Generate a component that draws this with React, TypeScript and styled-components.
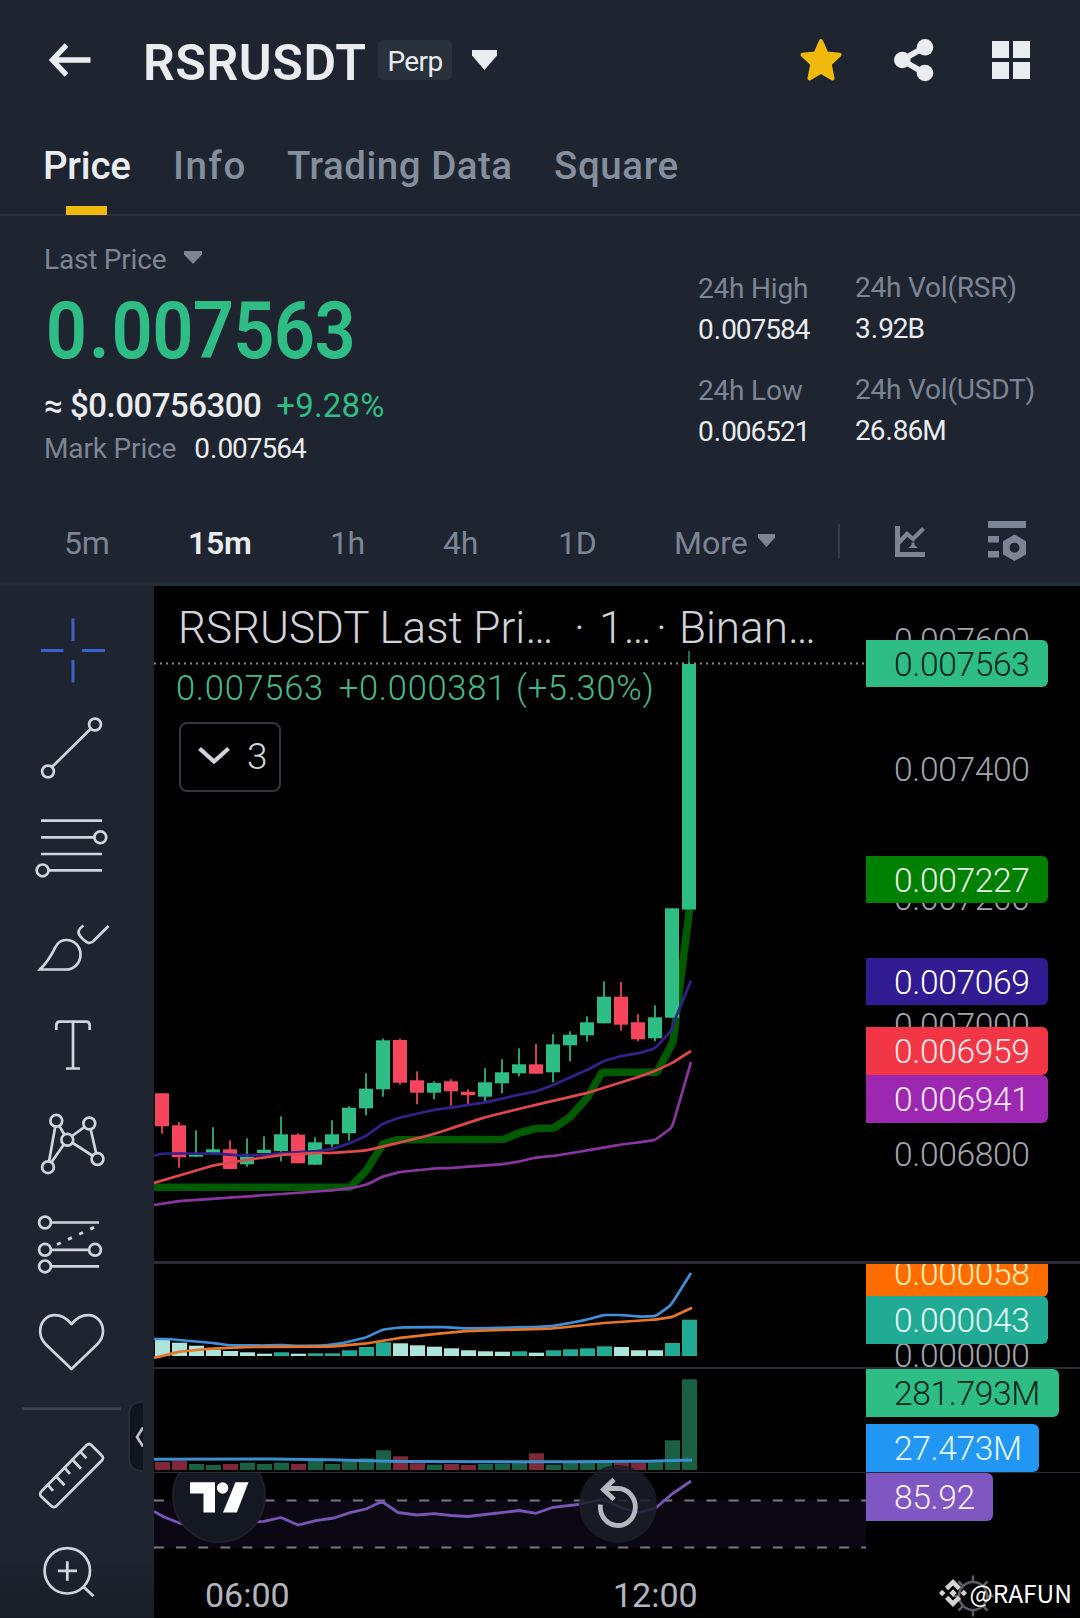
import React from 'react';
import styled, { createGlobalStyle } from 'styled-components';

const C = {
  bg: '#1e2530',
  white: '#eaecef',
  grey: '#7d8594',
  green: '#2ebd85',
  red: '#f6465d',
  yellow: '#f0b90b',
  rule: '#2a3039',
  icon: '#d1d4dc',
  axis: '#a3a5ac',
};

const Global = createGlobalStyle`
  * { box-sizing: border-box; }
  body { margin: 0; background: ${C.bg}; }
`;

const Page = styled.div`
  width: 1080px;
  height: 1618px;
  overflow: hidden;
  display: flex;
  flex-direction: column;
  background: ${C.bg};
  color: ${C.white};
  font-family: Roboto, 'Noto Sans', 'Liberation Sans', sans-serif;
`;

const Text = styled.span<{ $size: number; $weight?: number; $color?: string; $ls?: number }>`
  font-size: ${p => p.$size}px;
  font-weight: ${p => p.$weight ?? 400};
  color: ${p => p.$color ?? C.white};
  letter-spacing: ${p => p.$ls ?? 0}px;
  line-height: 1;
  white-space: pre;
`;

/* ---------- header ---------- */

const Header = styled.header`
  height: 120px;
  display: flex;
  align-items: center;
  padding: 0 50px 0 49px;
`;
const Title = styled.h1`
  margin: 0 12px 0 52px;
  padding-top: 5px;
  width: 223px;
  font-size: 50px;
  font-weight: 600;
  line-height: 1;
  letter-spacing: 0.6px;
`;
const Badge = styled.span`
  width: 74px;
  height: 40px;
  margin-right: 20px;
  padding-top: 2px;
  border-radius: 5px;
  background: #29313d;
  display: flex;
  align-items: center;
  justify-content: center;
  font-size: 28px;
  letter-spacing: -0.6px;
`;
const HeaderActions = styled.div`
  margin-left: auto;
  display: flex;
  align-items: center;
`;
const ActionGap = styled.span<{ $w: number }>`
  width: ${p => p.$w}px;
`;

const Caret = ({ w, h, color }: { w: number; h: number; color: string }) => (
  <svg width={w} height={h} viewBox="0 0 25 20" preserveAspectRatio="none">
    <path d="M0 0H25V5.5L12.5 20L0 5.5Z" fill={color} />
  </svg>
);
const CaretSlot = styled.span`
  display: flex;
  padding-bottom: 6px;
`;

/* ---------- tabs ---------- */

const Tabs = styled.nav`
  height: 96px;
  display: grid;
  grid-template-columns: 130px 114px 267px 1fr;
  padding-left: 43px;
  border-bottom: 2px solid ${C.rule};
`;
const Tab = styled.div<{ $active?: boolean; $ls: number }>`
  position: relative;
  height: 95px;
  padding-top: 24px;
  font-size: 38.5px;
  font-weight: 500;
  line-height: 44px;
  letter-spacing: ${p => p.$ls}px;
  white-space: nowrap;
  color: ${p => (p.$active ? C.white : '#848e9c')};
`;
const TabMark = styled.span`
  position: absolute;
  left: 23px;
  bottom: 0;
  width: 41px;
  height: 9px;
  background: ${C.yellow};
`;

/* ---------- price summary ---------- */

const Summary = styled.section`
  height: 288px;
  display: flex;
  justify-content: space-between;
  padding: 24px 25px 0 44px;
`;
const PriceColumn = styled.div`
  display: flex;
  flex-direction: column;
`;
const Row = styled.div<{ $h: number; $gap?: number; $pt?: number }>`
  height: ${p => p.$h}px;
  padding-top: ${p => p.$pt ?? 0}px;
  display: flex;
  align-items: center;
  gap: ${p => p.$gap ?? 0}px;
`;
const NumText = styled(Text)`
  letter-spacing: -0.037em;
`;
const BigPrice = styled(Text)`
  display: inline-block;
  padding-left: 2px;
  letter-spacing: -0.01em;
  transform: scaleX(0.915);
  transform-origin: left center;
`;
const Dot = styled.span`
  margin: 0 0.037em;
`;
const Num = ({ value, size }: { value: string; size: number }) => {
  const [a, b] = value.split('.');
  return (
    <NumText $size={size}>
      {a}
      <Dot>.</Dot>
      {b}
    </NumText>
  );
};
const Stats = styled.div`
  display: grid;
  grid-template-columns: 157px 200px;
  padding-top: 28px;
`;
const StatColumn = styled.div<{ $lift?: number }>`
  display: flex;
  flex-direction: column;
  gap: 20px;
  margin-top: -${p => p.$lift ?? 0}px;
`;
const Stat = ({ label, value }: { label: string; value: string }) => (
  <div>
    <Row $h={41}>
      <Text $size={28} $color={C.grey} $ls={-0.2}>{label}</Text>
    </Row>
    <Row $h={41}>
      <Num value={value} size={28} />
    </Row>
  </div>
);

/* ---------- intervals ---------- */

const Intervals = styled.div`
  height: 82px;
  display: grid;
  grid-template-columns: 124px 142px 113px 115px 116px 164px 57px 93px auto;
  align-items: center;
  padding: 0 0 0 64px;
  border-bottom: 4px solid #252d37;
`;
const MoreItem = styled.div`
  display: flex;
  align-items: center;
  gap: 10px;
`;
const VRule = styled.span`
  width: 2px;
  height: 34px;
  margin-bottom: 4px;
  background: #333b47;
`;
const IconSlot = styled.span`
  display: flex;
  padding-bottom: 4px;
`;

/* ---------- workspace ---------- */

const Workspace = styled.main`
  flex: 1;
  display: flex;
  min-height: 0;
`;
const Sidebar = styled.aside`
  position: relative;
  width: 154px;
  flex: none;
  background: linear-gradient(${C.bg} 94%, #181d27);
`;
const CollapseTab = styled.div`
  position: absolute;
  left: 128px;
  top: 815px;
  width: 15px;
  height: 71px;
  border-radius: 12px 0 0 12px;
  border: 2px solid #262b37;
  border-right: 0;
  background: #10141f;
  overflow: hidden;
  display: flex;
  align-items: center;
  justify-content: flex-end;
`;
const Chart = styled.div`
  position: relative;
  width: 926px;
  display: flex;
  flex-direction: column;
  background: #000;
`;
const Pane = styled.div<{ $h: number; $line?: number }>`
  position: relative;
  height: ${p => p.$h}px;
  flex: none;
  overflow: hidden;
  display: flex;
  border-bottom: ${p => p.$line ?? 0}px solid #2a2d36;
`;
const Plot = styled.svg`
  display: block;
  width: 712px;
  height: 100%;
  flex: none;
`;
const Axis = styled.div`
  position: relative;
  flex: 1;
`;
const AxisTag = styled.div<{ $y: number; $bg?: string; $color?: string; $w?: number }>`
  position: absolute;
  left: 0;
  top: ${p => p.$y - 24}px;
  width: ${p => p.$w ?? 182}px;
  height: 47.6px;
  padding-left: 28px;
  border-radius: 0 6px 6px 0;
  background: ${p => p.$bg ?? 'transparent'};
  color: ${p => p.$color ?? C.axis};
  font-size: 33.6px;
  font-weight: 340;
  line-height: 49.5px;
  letter-spacing: -0.35px;
  white-space: nowrap;
`;
const Legend = styled.div`
  position: absolute;
  left: 25px;
  top: 14px;
  display: flex;
  flex-direction: column;
`;
const LegendTitle = styled.div`
  height: 56px;
  display: grid;
  grid-template-columns: 396px 25px 57px 23px auto;
  align-items: center;
  margin-left: -1px;
`;
const LegendText = styled(Text)`
  font-weight: 330;
  color: #d2d4db;
`;
const LegendValues = styled.div`
  height: 64px;
  display: flex;
  align-items: center;
  gap: 15px;
  margin-left: -3px;
`;
const Collapse = styled.div`
  width: 102px;
  height: 70px;
  margin-top: 2px;
  border: 2px solid #35373e;
  border-radius: 8px;
  display: flex;
  align-items: center;
  gap: 17px;
  padding: 0 0 2px 17px;
`;
const TVBadge = styled.div`
  position: absolute;
  left: 18px;
  top: -24px;
  width: 94px;
  height: 94px;
  border-radius: 50%;
  background: #131822;
  border: 2px solid #221e27;
`;
const Reload = styled.div`
  position: absolute;
  left: 425px;
  top: 879px;
  width: 78px;
  height: 78px;
  border-radius: 50%;
  background: rgba(27, 29, 40, 0.86);
`;
const TimeAxis = styled.div`
  flex: 1;
  display: grid;
  grid-template-columns: 408px auto;
  padding: 4px 0 0 51px;
  align-items: center;
`;
const Watermark = styled.div`
  position: absolute;
  right: 8px;
  bottom: 9px;
  height: 32px;
  display: flex;
  align-items: center;
  gap: 3px;
  font-family: 'Noto Sans CJK SC', 'Noto Sans', sans-serif;
  font-size: 24.5px;
  line-height: 32px;
  color: #fff;
`;
const Gear = styled.svg`
  position: absolute;
  right: 85px;
  bottom: 0;
`;

/* ---------- data ---------- */

const TOP = 586;
const cx = (i: number) => 162 + i * 17;

// direction, high, body top, body bottom, low
const candles: [string, number, number, number, number][] = [
  ['r', 1093.3, 1093.3, 1126.3, 1133.7],
  ['r', 1122, 1125.3, 1157.3, 1167.7],
  ['g', 1130.3, 1154.7, 1156.7, 1156.7],
  ['g', 1127.3, 1149.3, 1152.7, 1152.7],
  ['r', 1140.3, 1149.3, 1169, 1169],
  ['g', 1138.3, 1156.7, 1164.3, 1166.7],
  ['g', 1136.3, 1149.7, 1153, 1153],
  ['g', 1116.3, 1134.3, 1151, 1161.3],
  ['r', 1133.3, 1134.7, 1163.3, 1163.3],
  ['g', 1137.3, 1142.3, 1164.7, 1164.7],
  ['g', 1120.3, 1134.3, 1144.3, 1147.3],
  ['g', 1106.3, 1107.7, 1133.3, 1140.7],
  ['g', 1073.3, 1088.7, 1108.3, 1115.3],
  ['g', 1038.7, 1040.3, 1089.3, 1096.7],
  ['r', 1038.7, 1040, 1082.7, 1084.7],
  ['r', 1071.3, 1080.3, 1092.7, 1104.3],
  ['g', 1081.3, 1083, 1092.7, 1099.3],
  ['r', 1079.3, 1081.3, 1091.3, 1105.7],
  ['r', 1089.3, 1091.7, 1095.2, 1104],
  ['g', 1068.3, 1082.3, 1096.7, 1103.3],
  ['g', 1059.3, 1072.3, 1083.3, 1093.3],
  ['g', 1048.3, 1064.3, 1073.3, 1076.3],
  ['r', 1044, 1064.3, 1073.7, 1073.7],
  ['g', 1034.3, 1044.3, 1072.3, 1082.3],
  ['g', 1031.3, 1034.7, 1045.3, 1061.3],
  ['g', 1016.3, 1022.3, 1035.3, 1041.3],
  ['g', 981.3, 996.7, 1023.3, 1023.3],
  ['r', 982, 996.7, 1024.7, 1030.7],
  ['r', 1014.3, 1022.3, 1039.3, 1041.3],
  ['g', 1005.3, 1017.3, 1038.3, 1041.3],
  ['g', 908.3, 908.3, 1017.7, 1017.7],
  ['g', 651, 664, 909.5, 909.5],
];

const macd: [number, number][] = [
  [1339.3, 0], [1342.7, 0], [1345.7, 0], [1349.7, 0], [1351, 0], [1352.3, 0], [1353.7, 0], [1352.3, 1],
  [1353.7, 0], [1353.3, 1], [1353.3, 1], [1350.3, 1], [1347, 1], [1342.3, 1], [1343.3, 0], [1345.3, 0],
  [1346.7, 0], [1348.3, 0], [1350.3, 0], [1351.3, 0], [1351.7, 0], [1351.3, 1], [1352.7, 0], [1350.3, 1],
  [1349.3, 1], [1348.3, 1], [1346.3, 1], [1347, 0], [1350.3, 0], [1350.3, 0], [1343, 1], [1319.7, 1],
];

const volume: number[] = [
  1462, 1460.7, 1464, 1465, 1464, 1462.7, 1464, 1462.7, 1464, 1460.3, 1464, 1461.3, 1458.3, 1450.3, 1456.3, 1463.3,
  1464.7, 1464, 1465, 1464, 1463.7, 1460.7, 1453.3, 1464.7, 1462.3, 1462.3, 1462.3, 1462.7, 1462.7, 1462.3, 1440.3,
  1379.3,
];

const smooth = (pts: number[][]) => {
  const k = 0.86;
  let d = `M${pts[0][0]} ${pts[0][1]}`;
  for (let i = 1; i < pts.length - 1; i++) {
    const [px, py] = pts[i - 1];
    const [x, y] = pts[i];
    const [nx, ny] = pts[i + 1];
    d += `L${x * k + px * (1 - k)} ${y * k + py * (1 - k)}Q${x} ${y} ${x * k + nx * (1 - k)} ${y * k + ny * (1 - k)}`;
  }
  const e = pts[pts.length - 1];
  return d + `L${e[0]} ${e[1]}`;
};

const blueLine = [[154, 1155.7], [162, 1153.5], [215, 1153.5], [240, 1155.5], [262, 1155], [281, 1153], [315, 1151.5], [332, 1149], [349, 1143.5], [366, 1136], [383, 1123.5], [400, 1117.5], [434, 1110], [451, 1107.5], [485, 1102.5], [519, 1094.7], [536, 1091.5], [553, 1085], [587, 1070], [604, 1061], [621, 1056], [640, 1053], [655, 1048.3], [671, 1031], [676, 1017], [691, 980.5]];
const redLine = [[154, 1183], [213, 1165.5], [240, 1161], [264, 1157.5], [281, 1155], [315, 1153], [332, 1153], [366, 1150.5], [400, 1142.5], [434, 1134], [450, 1128.7], [485, 1117.3], [536, 1104.7], [587, 1093], [604, 1087.7], [638, 1077], [655, 1071], [672, 1063], [691, 1051]];
const greenLine = [[154, 1187.3], [350, 1187.3], [366, 1171], [383, 1144], [398, 1139.7], [504, 1139.3], [519, 1133], [536, 1128.5], [554, 1128], [570, 1117], [587, 1098], [602, 1072.3], [657, 1072.3], [673, 1042], [690, 905]];
const purpleLine = [[154, 1205], [179, 1201], [230, 1197.7], [281, 1194], [330, 1190.5], [355, 1187.5], [368, 1184], [383, 1176.5], [400, 1172], [434, 1168.5], [451, 1168], [504, 1164], [519, 1161.5], [536, 1157.5], [553, 1156], [587, 1150.5], [621, 1144.5], [638, 1142.5], [655, 1140], [672, 1127.5], [691, 1062]];
const macdLine = [[154, 1339], [168, 1339], [190, 1341], [213, 1343], [230, 1345.3], [264, 1345.5], [281, 1345], [298, 1346], [325, 1345.5], [343, 1343], [366, 1337.5], [383, 1329.5], [400, 1327.5], [440, 1327], [468, 1328.5], [536, 1327], [553, 1326], [570, 1323], [587, 1319.7], [604, 1315], [621, 1315], [640, 1316.7], [656, 1316], [671, 1305], [691, 1273]];
const signalLine = [[154, 1358], [179, 1351.7], [213, 1348.5], [250, 1347], [332, 1346.5], [366, 1343.5], [400, 1338], [434, 1334], [468, 1331], [553, 1328.5], [604, 1323], [656, 1319.5], [672, 1317], [692, 1307.7]];
const volLine = [[154, 1459.3], [280, 1459], [340, 1460], [400, 1461.5], [560, 1461.7], [650, 1461.3], [692, 1460]];
const rsiLine = [[154, 1511.5], [164, 1517], [180, 1523.3], [213, 1527], [247, 1522.5], [264, 1521.3], [281, 1517.5], [298, 1525], [317, 1520.3], [334, 1518], [350, 1512.7], [366, 1509], [382, 1501.5], [398, 1512.5], [417, 1515], [434, 1513.7], [451, 1515.5], [468, 1516.5], [485, 1514.5], [519, 1510.5], [536, 1513.3], [553, 1507.3], [578, 1504.5], [603, 1499], [622, 1508], [638, 1513], [656, 1507.7], [672, 1494], [691, 1481]];

const Line = ({ pts, color, w = 2.7 }: { pts: number[][]; color: string; w?: number }) => (
  <path d={smooth(pts)} fill="none" stroke={color} strokeWidth={w} strokeLinejoin="round" />
);

const MainPlot = () => (
  <Plot viewBox={`154 ${TOP} 712 675`}>
    <line x1="154" x2="866" y1="663.5" y2="663.5" stroke="#7d8f86" strokeWidth="2" strokeDasharray="2 4" />
    <path d={'M' + greenLine.map(p => p.join(' ')).join('L')} fill="none" stroke="#005a00" strokeWidth="7.6" strokeLinejoin="bevel" />
    {candles.map(([dir, h, t, b, l], i) => {
      const fill = dir === 'g' ? C.green : C.red;
      return (
        <g key={i} fill={fill}>
          <rect x={cx(i) - 1} y={h} width="2" height={l - h} opacity={i === 31 ? 0.6 : 0.85} />
          <rect x={cx(i) - 7} y={t} width="14" height={b - t} />
        </g>
      );
    })}
    <Line pts={purpleLine} color="#8a35a0" />
    <Line pts={blueLine} color="#33228c" />
    <Line pts={redLine} color="#e0484c" />
  </Plot>
);

const MacdPlot = () => (
  <Plot viewBox="154 1264 712 103">
    {macd.map(([y, up], i) => (
      <rect key={i} x={cx(i) - 7} y={y} width="15" height={1356 - y} fill={up ? '#22ab94' : '#ace5dc'} />
    ))}
    <Line pts={macdLine} color="#3f90da" />
    <Line pts={signalLine} color="#e8762a" />
  </Plot>
);

const VolumePlot = () => (
  <Plot viewBox="154 1369 712 103">
    {volume.map((y, i) => (
      <rect key={i} x={cx(i) - 7} y={y} width="15" height={1470 - y} fill={candles[i][0] === 'g' ? '#1a6045' : '#802839'} />
    ))}
    <Line pts={volLine} color="#3a8fce" w={3} />
  </Plot>
);

const RsiPlot = () => (
  <Plot viewBox="154 1473 712 95">
    <rect x="154" y="1500.5" width="712" height="47" fill="#0b0713" />
    <line x1="154" x2="866" y1="1500.5" y2="1500.5" stroke="#777881" strokeWidth="2" strokeDasharray="10 12.1" />
    <line x1="154" x2="866" y1="1547.5" y2="1547.5" stroke="#777881" strokeWidth="2" strokeDasharray="10 12.1" />
    <path d={'M' + rsiLine.map(p => p.join(' ')).join('L')} fill="none" stroke="#7955b8" strokeWidth="2.8" strokeLinejoin="round" />
  </Plot>
);

const ring = (x: number, y: number) => <circle key={`${x}-${y}`} cx={x} cy={y} r="5.9" fill={C.bg} />;

const DrawingTools = () => (
  <svg width="154" height="1032" viewBox="0 586 154 1032" fill="none" stroke={C.icon} strokeWidth="2.7">
    <path d="M73 618.5V641M73 660V682.5M41 650.5H63.500M82 650.5H105" stroke="#3b62cc" strokeWidth="3" />
    <path d="M52 767L91 728.500" />
    {ring(95, 724.5)}
    {ring(48, 771.5)}
    <path d="M41 820.7H102M41 837.3H96M41 854H102M46 870.3H102" />
    {ring(100.3, 837.3)}
    {ring(42.6, 870.4)}
    <path d="M40 969.5C51 958 53 951 55.500 947C58 942 62 940 66 940C74 940 80.500 946 80.500 954.500C80.500 963 74 969.500 66 969.500Z" />
    <path d="M83.500 925.500C79 928.500 76.500 932 80.500 936.500C85 942 90 945.500 94 940.500L108.500 926" />
    <path d="M56.300 1030V1025.500Q56.300 1021.700 60 1021.700H86Q89.700 1021.700 89.700 1025.500V1030M73 1021.700V1068.500M66 1068.500H80" />
    <g transform="translate(0 0.5)">
      <path d="M56.300 1120.300L48 1166.700L67.300 1139ZM67.300 1139L89.300 1123L97.500 1158.500Z" />
      {ring(56.3, 1120.3)}
      {ring(89.3, 1123)}
      {ring(67.3, 1139.3)}
      {ring(97.5, 1158.5)}
      {ring(48, 1166.7)}
    </g>
    <g transform="translate(0 1.5)">
      <path d="M45 1221H99M45 1248.300H95M45 1264.900H99" />
      <path d="M57 1243L97 1224.500" strokeDasharray="4.200 8" strokeWidth="3" />
      {ring(45, 1221)}
      {ring(45, 1248.3)}
      {ring(95, 1248.3)}
      {ring(45, 1264.9)}
    </g>
    <path transform="translate(0 2.5)" d="M71.500 1321.500C65 1314 59 1312.700 55 1312.700C46 1312.700 40.200 1320 40.200 1329C40.200 1335 42 1338 46 1342L71.500 1366.500L97 1342C101 1338 103 1335 103 1329C103 1320 97 1312.700 88 1312.700C84 1312.700 78 1314 71.500 1321.500Z" strokeLinejoin="round" />
    <path d="M22 1408.700H121" stroke="#3d424c" strokeWidth="3" />
    <g transform="translate(0 3.8)">
      <path d="M42 1487L86.500 1441.500Q89 1439 91.500 1441.500L101.500 1451.500Q104.500 1454 101.500 1457L57 1501.500Q54 1505 51 1502L41.500 1493Q38.500 1490 42 1487Z" />
      <path d="M48 1481L53 1487M56.500 1473L64.500 1481.500M65 1464.500L70 1470M73 1456.500L81 1465M81 1448.500L86.500 1454.500" />
    </g>
    <g transform="translate(0 4.8)">
      <circle cx="67.300" cy="1566" r="22.700" />
      <path d="M58 1566H77M67.300 1556.500V1576M83 1581.500L93.500 1591.500" strokeWidth="2.800" />
    </g>
  </svg>
);

const BackIcon = () => (
  <svg width="42" height="34" viewBox="0 0 42 34" fill="none" stroke={C.white} strokeWidth="5.400">
    <path d="M4 17H41.500M17.500 2L3.500 17L17.500 32" />
  </svg>
);
const StarIcon = () => (
  <svg width="42" height="44" viewBox="0 0 42 44">
    <path
      d="M21 3L26.500 15.500L39.500 16.800L29.700 26L32.500 40.500L21 33.700L9.500 40.500L12.300 26L2.500 16.800L15.500 15.500Z"
      fill={C.yellow} stroke={C.yellow} strokeWidth="4" strokeLinejoin="round"
    />
  </svg>
);
const ShareIcon = () => (
  <svg width="40" height="44" viewBox="0 0 40 44" fill={C.white}>
    <path d="M8 22L31 9M8 22L31 35.500" stroke={C.white} strokeWidth="6" />
    <circle cx="8.300" cy="22" r="8.300" />
    <circle cx="31" cy="9.300" r="8.300" />
    <circle cx="31" cy="35" r="8.300" />
  </svg>
);
const GridIcon = () => (
  <svg width="38" height="38" viewBox="0 0 38 38" fill={C.white}>
    <path d="M0 0H17V17H0ZM21 0H38V17H21ZM0 21H17V38H0ZM21 21H38V38H21Z" />
  </svg>
);
const IndicatorIcon = () => (
  <svg width="30" height="31" viewBox="0 0 30 31" fill="none" stroke={C.grey}>
    <path d="M2.500 0V28.500H30" strokeWidth="5" />
    <path d="M3.500 17L12 8L18 13L28.500 2.500" strokeWidth="4.200" />
    <path d="M13.500 22L16.500 19V16.500H19.500V19L23 22Z" fill={C.grey} stroke="none" />
  </svg>
);
const SettingsIcon = () => (
  <svg width="38" height="41" viewBox="0 0 38 41" fill={C.grey}>
    <path d="M0 0H38V7H0ZM0 15H11V21.500H0ZM0 30H11V36.500H0Z" />
    <path fillRule="evenodd" d="M26.500 13.500L38 20.200V33.400L26.500 40L15 33.400V20.200ZM26.500 21.800A5 5 0 1 0 26.500 31.800A5 5 0 1 0 26.500 21.800Z" />
  </svg>
);

const intervals = [
  { label: '5m', ls: -0.3 },
  { label: '15m', ls: -0.3, active: true },
  { label: '1h', ls: -0.6 },
  { label: '4h', ls: -0.3 },
  { label: '1D', ls: -0.3 },
];

export default function App() {
  return (
    <Page>
      <Global />
      <Header>
        <BackIcon />
        <Title>RSRUSDT</Title>
        <Badge>Perp</Badge>
        <Caret w={25} h={20} color={C.white} />
        <HeaderActions>
          <StarIcon />
          <ActionGap $w={52} />
          <ShareIcon />
          <ActionGap $w={58} />
          <GridIcon />
        </HeaderActions>
      </Header>

      <Tabs>
        <Tab $active $ls={-0.2}>Price<TabMark /></Tab>
        <Tab $ls={1.5}>Info</Tab>
        <Tab $ls={0.5}>Trading Data</Tab>
        <Tab $ls={0.6}>Square</Tab>
      </Tabs>

      <Summary>
        <PriceColumn>
          <Row $h={40} $gap={18}>
            <Text $size={28} $color={C.grey} $ls={-0.2}>Last Price</Text>
            <CaretSlot><Caret w={18} h={13} color={C.grey} /></CaretSlot>
          </Row>
          <Row $h={99} $pt={3}>
            <BigPrice $size={79} $weight={600} $color={C.green}>
              0<Dot>.</Dot>007563
            </BigPrice>
          </Row>
          <Row $h={52} $gap={15}>
            <Text $size={33} $weight={500} $ls={-0.5}>≈ $0.00756300</Text>
            <Text $size={33} $weight={450} $ls={0.2} $color={C.green}>+9.28%</Text>
          </Row>
          <Row $h={36} $gap={18}>
            <Text $size={28} $color={C.grey} $ls={-0.15}>Mark Price</Text>
            <Num value="0.007564" size={28} />
          </Row>
        </PriceColumn>
        <Stats>
          <StatColumn>
            <Stat label="24h High" value="0.007584" />
            <Stat label="24h Low" value="0.006521" />
          </StatColumn>
          <StatColumn $lift={1}>
            <Stat label="24h Vol(RSR)" value="3.92B" />
            <Stat label="24h Vol(USDT)" value="26.86M" />
          </StatColumn>
        </Stats>
      </Summary>

      <Intervals>
        {intervals.map(i => (
          <Text key={i.label} $size={32} $ls={i.ls} $weight={i.active ? 600 : 400} $color={i.active ? C.white : C.grey}>
            {i.label}
          </Text>
        ))}
        <MoreItem>
          <Text $size={32} $color={C.grey}>More</Text>
          <CaretSlot><Caret w={17} h={13} color={C.grey} /></CaretSlot>
        </MoreItem>
        <VRule />
        <IconSlot><IndicatorIcon /></IconSlot>
        <IconSlot><SettingsIcon /></IconSlot>
      </Intervals>

      <Workspace>
        <Sidebar>
          <DrawingTools />
          <CollapseTab>
            <svg width="8" height="22" viewBox="0 0 8 22" fill="none" stroke="#b9c4c9" strokeWidth="2.600">
              <path d="M8 1.500L2 11L8 20.500" />
            </svg>
          </CollapseTab>
        </Sidebar>

        <Chart>
          <Pane $h={678} $line={3}>
            <MainPlot />
            <Axis>
              <AxisTag $y={54}>0.007600</AxisTag>
              <AxisTag $y={77.5} $bg={C.green} $color="#04261a">0.007563</AxisTag>
              <AxisTag $y={182.6}>0.007400</AxisTag>
              <AxisTag $y={311.8}>0.007200</AxisTag>
              <AxisTag $y={293.6} $bg="#008000" $color="#e8f5e8">0.007227</AxisTag>
              <AxisTag $y={395.5} $bg="#311b92" $color="#fff">0.007069</AxisTag>
              <AxisTag $y={439}>0.007000</AxisTag>
              <AxisTag $y={465.4} $bg="#f23645" $color="#ffe9ea">0.006959</AxisTag>
              <AxisTag $y={513} $bg="#9c27b0" $color="#fbe6fd">0.006941</AxisTag>
              <AxisTag $y={567.6}>0.006800</AxisTag>
            </Axis>
            <Legend>
              <LegendTitle>
                <LegendText $size={44}>RSRUSDT Last Pri…</LegendText>
                <LegendText $size={44}>·</LegendText>
                <LegendText $size={44}>1…</LegendText>
                <LegendText $size={44}>·</LegendText>
                <LegendText $size={44}>Binan…</LegendText>
              </LegendTitle>
              <LegendValues>
                <Text $size={34.5} $weight={330} $ls={0.7} $color="#45ba89">0.007563</Text>
                <Text $size={34.5} $weight={330} $ls={0.7} $color="#45ba89">+0.000381 (+5.30%)</Text>
              </LegendValues>
              <Collapse>
                <svg width="32" height="20" viewBox="0 0 32 20" fill="none" stroke={C.icon} strokeWidth="4.200">
                  <path d="M1.500 2.500L16 15.500L30.500 2.500" />
                </svg>
                <Text $size={37} $weight={330} $color={C.icon}>3</Text>
              </Collapse>
            </Legend>
          </Pane>

          <Pane $h={105} $line={2}>
            <MacdPlot />
            <Axis>
              <AxisTag $y={91}>0.000000</AxisTag>
              <AxisTag $y={9} $bg="#ff6d00" $color="#ffeeb8">0.000058</AxisTag>
              <AxisTag $y={56.4} $bg="#22ab94" $color="#e6fffb">0.000043</AxisTag>
            </Axis>
          </Pane>

          <Pane $h={104} $line={1}>
            <VolumePlot />
            <Axis>
              <AxisTag $y={24} $bg={C.green} $color="#04261a" $w={193}>281.793M</AxisTag>
              <AxisTag $y={79} $bg="#2196f3" $color="#e3f9ff" $w={173}>27.473M</AxisTag>
            </Axis>
          </Pane>

          <Pane $h={95}>
            <RsiPlot />
            <Axis>
              <AxisTag $y={24} $bg="#7e57c2" $color="#fbeeff" $w={127}>85.92</AxisTag>
            </Axis>
            <TVBadge>
              <svg width="90" height="90" viewBox="174 1451 90 90" fill="#fff">
                <path d="M190 1482.300H215V1512.500H203.500V1493.500H190Z" />
                <circle cx="222.600" cy="1488" r="5.700" />
                <path d="M235.500 1482.300H248.500L236.800 1512.500H223Z" />
              </svg>
            </TVBadge>
          </Pane>

          <TimeAxis>
            <Text $size={34} $color="#b2b5be">06:00</Text>
            <Text $size={34} $color="#b2b5be">12:00</Text>
          </TimeAxis>

          <Reload>
            <svg width="78" height="78" viewBox="579 1466 78 78" fill="none" stroke="#b6b8c0" strokeWidth="4.800">
              <path d="M600.500 1505.500A17.500 18.500 0 1 0 618 1489.500H605" />
              <path d="M614 1480.500L603.500 1490.500L614 1500.500" />
            </svg>
          </Reload>

          <Gear width="44" height="44" viewBox="-22 -22 44 44" fill="none" stroke="#5a5c63" strokeWidth="2.600">
            <circle r="14" />
            {[0, 45, 90, 135, 180, 225, 270, 315].map(a => (
              <path key={a} d="M0 -14V-20.500" transform={`rotate(${a})`} />
            ))}
          </Gear>
          <Watermark>
            <svg width="28" height="28" viewBox="0 0 28 28" fill="#d4d4d4">
              <path d="M14 0L22 8L18.800 11.200L14 6.400L9.200 11.200L6 8ZM14 28L22 20L18.800 16.800L14 21.600L9.200 16.800L6 20ZM3.200 10.800L6.400 14L3.200 17.200L0 14ZM24.800 10.800L28 14L24.800 17.200L21.600 14ZM14 10.300L17.700 14L14 17.700L10.300 14Z" />
            </svg>
            <span>@RAFUN</span>
          </Watermark>
        </Chart>
      </Workspace>
    </Page>
  );
}
